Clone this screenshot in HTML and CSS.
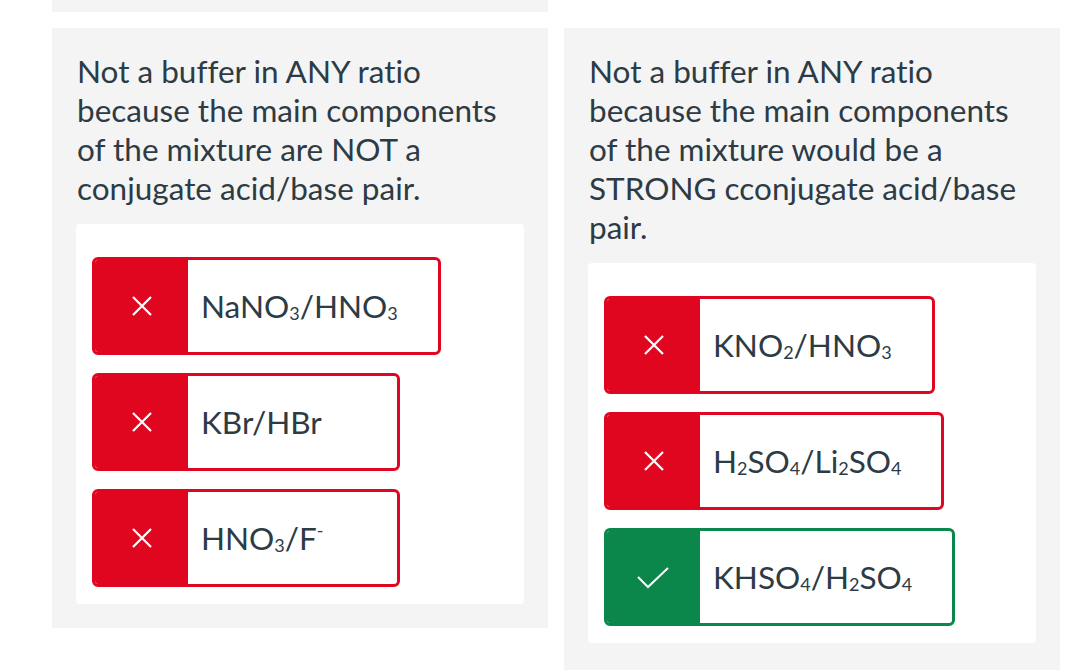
FILE: index.html
```html
<!DOCTYPE html>
<html>
<head>
<meta charset="utf-8">
<link rel="stylesheet" href="styles.css">
</head>
<body>
<div class="page">
  <div class="col">
    <div class="strip"></div>
    <div class="panel">
      <p class="label">Not a buffer in ANY ratio because the main components of the mixture are NOT a conjugate acid/base pair.</p>
      <div class="box">
        <div class="item wrong">
          <div class="mark"><svg width="20" height="20" viewBox="0 0 20 20"><path d="M1 1L19 19M19 1L1 19" stroke="#fff" stroke-width="2.2" fill="none"/></svg></div>
          <div class="txt">NaNO<sub>3</sub>/HNO<sub>3</sub></div>
        </div>
        <div class="item wrong">
          <div class="mark"><svg width="20" height="20" viewBox="0 0 20 20"><path d="M1 1L19 19M19 1L1 19" stroke="#fff" stroke-width="2.2" fill="none"/></svg></div>
          <div class="txt">KBr/HBr</div>
        </div>
        <div class="item wrong">
          <div class="mark"><svg width="20" height="20" viewBox="0 0 20 20"><path d="M1 1L19 19M19 1L1 19" stroke="#fff" stroke-width="2.2" fill="none"/></svg></div>
          <div class="txt">HNO<sub>3</sub>/F<sup>-</sup></div>
        </div>
      </div>
    </div>
  </div>
  <div class="col">
    <div class="strip blank"></div>
    <div class="panel open">
      <p class="label">Not a buffer in ANY ratio because the main components of the mixture would be a STRONG cconjugate acid/base pair.</p>
      <div class="box">
        <div class="item wrong">
          <div class="mark"><svg width="20" height="20" viewBox="0 0 20 20"><path d="M1 1L19 19M19 1L1 19" stroke="#fff" stroke-width="2.2" fill="none"/></svg></div>
          <div class="txt">KNO<sub>2</sub>/HNO<sub>3</sub></div>
        </div>
        <div class="item wrong">
          <div class="mark"><svg width="20" height="20" viewBox="0 0 20 20"><path d="M1 1L19 19M19 1L1 19" stroke="#fff" stroke-width="2.2" fill="none"/></svg></div>
          <div class="txt">H<sub>2</sub>SO<sub>4</sub>/Li<sub>2</sub>SO<sub>4</sub></div>
        </div>
        <div class="item right">
          <div class="mark"><svg width="34" height="24" viewBox="0 0 34 24"><path d="M2 10L12 20L32 1" stroke="#fff" stroke-width="2" fill="none"/></svg></div>
          <div class="txt">KHSO<sub>4</sub> /H<sub>2</sub>SO<sub>4</sub></div>
        </div>
      </div>
    </div>
  </div>
</div>
</body>
</html>
```
FILE: styles.css
```css
html, body {
  margin: 0;
  padding: 0;
  background: #fff;
}
body {
  font-family: Lato, "Open Sans", sans-serif;
  color: #2d3b45;
  overflow: hidden;
  font-variant-ligatures: none;
}
.page {
  display: flex;
  gap: 16px;
  padding-left: 52px;
}
.col {
  width: 496px;
  display: flex;
  flex-direction: column;
  gap: 16px;
}
.strip {
  height: 12px;
  background: #f4f4f4;
}
.strip.blank {
  background: transparent;
}
.panel {
  background: #f4f4f4;
  padding: 24px;
}
.panel.open {
  padding-bottom: 60px;
}
.label {
  margin: 0 0 16px 1px;
  font-size: 31.5px;
  line-height: 39px;
}
.box {
  background: #fff;
  border-radius: 4px;
  padding: 33px 16px 17px;
  display: flex;
  flex-direction: column;
  align-items: flex-start;
  gap: 18px;
}
.item {
  display: flex;
  min-width: 308px;
  height: 98px;
  box-sizing: border-box;
  border: 3px solid #e0061f;
  border-radius: 6px;
  background: #fff;
  overflow: hidden;
}
.item.right {
  border-color: #0b874b;
}
.mark {
  width: 93px;
  flex: none;
  background: #e0061f;
  display: flex;
  align-items: center;
  justify-content: center;
}
.right .mark {
  background: #0b874b;
}
.right .mark svg {
  margin-top: 4px;
  margin-left: -2px;
}
.txt {
  flex: 1;
  display: flex;
  align-items: center;
  padding: 0 40px 0 13px;
  font-size: 31.5px;
  white-space: nowrap;
}
.txt sub {
  font-size: 18px;
  position: relative;
  top: 7px;
  vertical-align: baseline;
}
.txt sup {
  font-size: 18px;
  position: relative;
  top: -8px;
  vertical-align: baseline;
}
```
